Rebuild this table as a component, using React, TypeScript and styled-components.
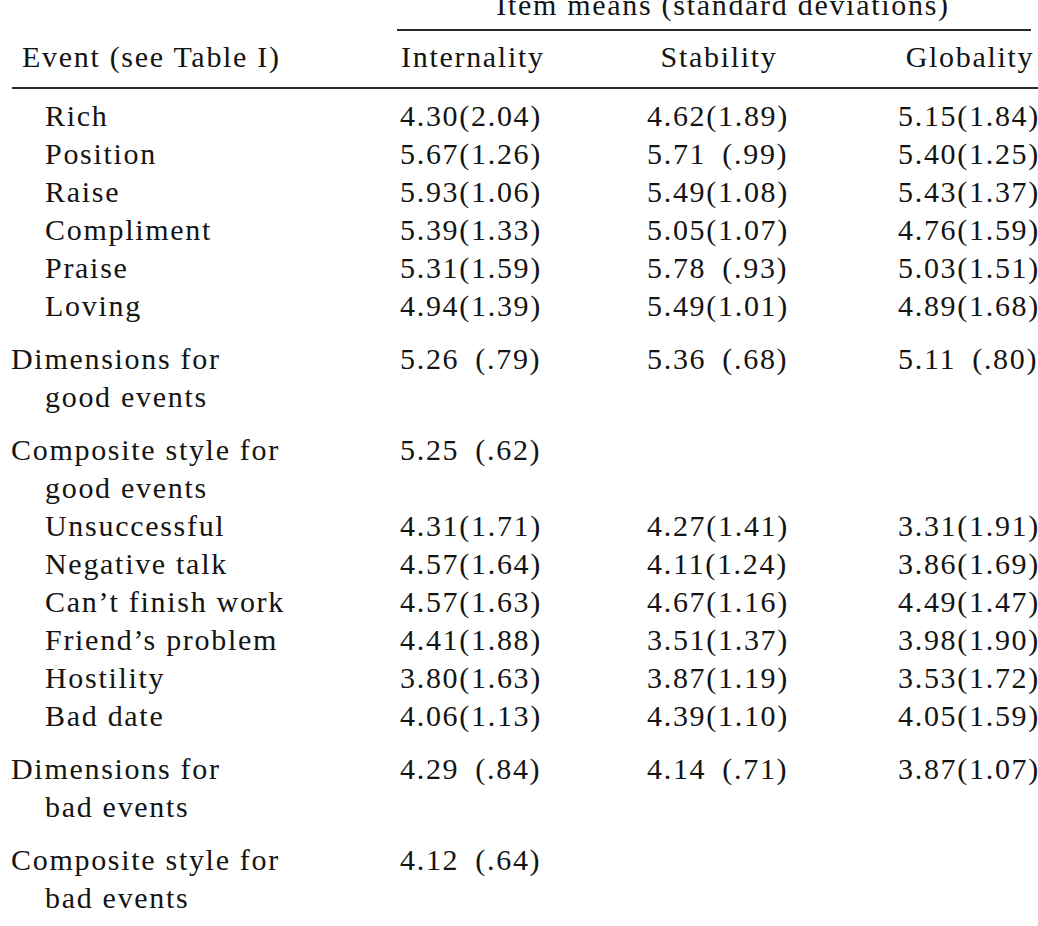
import React from "react";
import styled, { createGlobalStyle } from "styled-components";

type Stat = [string, string];

type Item = {
  label: string[];
  indent?: boolean;
  values: Stat[];
};

const goodEvents: Item[] = [
  { label: ["Rich"], indent: true, values: [["4.30", "(2.04)"], ["4.62", "(1.89)"], ["5.15", "(1.84)"]] },
  { label: ["Position"], indent: true, values: [["5.67", "(1.26)"], ["5.71", "(.99)"], ["5.40", "(1.25)"]] },
  { label: ["Raise"], indent: true, values: [["5.93", "(1.06)"], ["5.49", "(1.08)"], ["5.43", "(1.37)"]] },
  { label: ["Compliment"], indent: true, values: [["5.39", "(1.33)"], ["5.05", "(1.07)"], ["4.76", "(1.59)"]] },
  { label: ["Praise"], indent: true, values: [["5.31", "(1.59)"], ["5.78", "(.93)"], ["5.03", "(1.51)"]] },
  { label: ["Loving"], indent: true, values: [["4.94", "(1.39)"], ["5.49", "(1.01)"], ["4.89", "(1.68)"]] },
];

const badEvents: Item[] = [
  { label: ["Composite style for", "good events"], values: [["5.25", "(.62)"]] },
  { label: ["Unsuccessful"], indent: true, values: [["4.31", "(1.71)"], ["4.27", "(1.41)"], ["3.31", "(1.91)"]] },
  { label: ["Negative talk"], indent: true, values: [["4.57", "(1.64)"], ["4.11", "(1.24)"], ["3.86", "(1.69)"]] },
  { label: ["Can\u2019t finish work"], indent: true, values: [["4.57", "(1.63)"], ["4.67", "(1.16)"], ["4.49", "(1.47)"]] },
  { label: ["Friend\u2019s problem"], indent: true, values: [["4.41", "(1.88)"], ["3.51", "(1.37)"], ["3.98", "(1.90)"]] },
  { label: ["Hostility"], indent: true, values: [["3.80", "(1.63)"], ["3.87", "(1.19)"], ["3.53", "(1.72)"]] },
  { label: ["Bad date"], indent: true, values: [["4.06", "(1.13)"], ["4.39", "(1.10)"], ["4.05", "(1.59)"]] },
];

const groups: { gap: number; items: Item[] }[] = [
  { gap: 0, items: goodEvents },
  { gap: 15, items: [{ label: ["Dimensions for", "good events"], values: [["5.26", "(.79)"], ["5.36", "(.68)"], ["5.11", "(.80)"]] }] },
  { gap: 15, items: badEvents },
  { gap: 15, items: [{ label: ["Dimensions for", "bad events"], values: [["4.29", "(.84)"], ["4.14", "(.71)"], ["3.87", "(1.07)"]] }] },
  { gap: 15, items: [{ label: ["Composite style for", "bad events"], values: [["4.12", "(.64)"]] }] },
];

const GlobalStyle = createGlobalStyle`
  html, body {
    margin: 0;
    background: #ffffff;
  }
`;

const App = () => {
  return (
    <>
      <GlobalStyle />
      <TableStyle>
        <SpannerRow>
          <Spanner>Item means (standard deviations)</Spanner>
        </SpannerRow>

        <HeadRow>
          <HeadLabel>Event (see Table I)</HeadLabel>
          <HeadCell>Internality</HeadCell>
          <HeadCell>Stability</HeadCell>
          <HeadCell>Globality</HeadCell>
        </HeadRow>

        <Body>
          {groups.map((group, gi) => (
            <Group key={gi} $gap={group.gap}>
              {group.items.map((item) => (
                <Row key={item.label.join(" ")}>
                  <Label>
                    {item.label.map((line, li) => (
                      <Line key={line} $indent={item.indent || li > 0}>
                        {line}
                      </Line>
                    ))}
                  </Label>
                  {item.values.map(([mean, sd], vi) => (
                    <Value key={vi}>
                      {mean}
                      <Sd>{sd}</Sd>
                    </Value>
                  ))}
                </Row>
              ))}
            </Group>
          ))}
        </Body>
      </TableStyle>
    </>
  );
};

const columns = "389px 247px 251px 1fr";

const TableStyle = styled.div`
  width: 1038px;
  height: 926px;
  box-sizing: border-box;
  padding-left: 11px;
  overflow: hidden;
  font-family: "Liberation Serif", "Times New Roman", serif;
  font-size: 30px;
  line-height: 38px;
  letter-spacing: 1.7px;
  color: #141414;
`;

const SpannerRow = styled.div`
  display: grid;
  grid-template-columns: ${columns};
  margin-top: -14px;
`;

const Spanner = styled.div`
  grid-column: 2 / -1;
  margin: 0 7px 0 -3px;
  padding: 0 0 5px 18px;
  text-align: center;
  white-space: nowrap;
  border-bottom: 2px solid #2a2a2a;
`;

const HeadRow = styled.div`
  display: grid;
  grid-template-columns: ${columns};
  margin-left: 1px;
  padding: 7px 0 11px;
  border-bottom: 2px solid #2a2a2a;
`;

const HeadLabel = styled.div`
  padding-left: 10px;
  white-space: nowrap;
`;

const HeadCell = styled.div`
  width: 142px;
  text-align: center;
  white-space: nowrap;
`;

const Body = styled.div`
  padding-top: 8px;
`;

const Group = styled.div<{ $gap: number }>`
  margin-top: ${(p) => p.$gap}px;
`;

const Row = styled.div`
  display: grid;
  grid-template-columns: ${columns};
  align-items: start;
`;

const Label = styled.div`
  display: flex;
  flex-direction: column;
  white-space: nowrap;
`;

const Line = styled.span<{ $indent: boolean }>`
  padding-left: ${(p) => (p.$indent ? "34px" : "0")};
`;

const Value = styled.div`
  white-space: nowrap;
`;

const Sd = styled.span`
  display: inline-block;
  width: 82px;
  text-align: right;
`;

export default App;
